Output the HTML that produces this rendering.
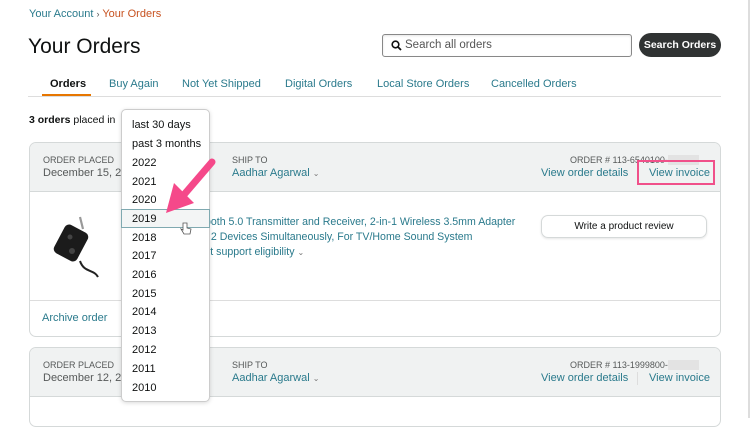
<!DOCTYPE html>
<html><head><meta charset="utf-8"><style>
*{margin:0;padding:0;box-sizing:border-box}
body{width:750px;height:418px;overflow:hidden;background:#fff;font-family:"Liberation Sans",sans-serif;color:#0f1111;position:relative;font-size:11px}
.a{position:absolute;white-space:nowrap}
.link{color:#2a7a8c}
.card{position:absolute;left:29px;width:692px;border:1px solid #d5d9d9;border-radius:7px;overflow:hidden}
.hd{background:#f0f2f2;border-bottom:1px solid #d5d9d9;height:49px;position:relative}
.lbl{font-size:9px;color:#565959}
.dd{position:absolute;left:121px;top:109px;width:89px;height:293px;background:#fff;border:1px solid #ccc;border-radius:5px;box-shadow:0 1px 4px rgba(0,0,0,.15)}
.dd div{position:absolute;left:10px;font-size:11px;color:#0f1111}
</style></head><body>
<div style="position:absolute;right:0;top:0;width:2px;height:418px;background:#ddd"></div>
<div class="a" style="left:29px;top:8px;font-size:11px"><span class="link">Your Account</span> <span style="color:#555;font-size:9px">›</span> <span style="color:#c7511f">Your Orders</span></div>
<div class="a" style="left:28px;top:35px;font-size:21px;color:#0f1111">Your Orders</div>
<div class="a" style="left:382px;top:34px;width:250px;height:23px;border:1px solid #888;border-radius:3px;box-shadow:inset 0 1px 2px rgba(0,0,0,.1)">
<svg class="a" style="left:8px;top:5px" width="11" height="11" viewBox="0 0 11 11"><circle cx="4.5" cy="4.5" r="3.3" fill="none" stroke="#111" stroke-width="1.6"/><path d="M7 7l3 3" stroke="#111" stroke-width="1.8"/></svg>
<span class="a" style="left:22px;top:4px;font-size:11.5px;color:#555">Search all orders</span></div>
<div class="a" style="left:639px;top:33px;width:82px;height:24px;background:#303333;border-radius:12px;color:#fff;font-size:10.5px;font-weight:bold;text-align:center;line-height:24px">Search Orders</div>
<div class="a" style="left:50px;top:78px;font-weight:bold;font-size:11px">Orders</div>
<div class="a" style="left:42px;top:94px;width:49px;height:2px;background:#e77600"></div>
<div class="a link" style="left:109px;top:78px">Buy Again</div>
<div class="a link" style="left:182px;top:78px">Not Yet Shipped</div>
<div class="a link" style="left:285px;top:78px">Digital Orders</div>
<div class="a link" style="left:377px;top:78px">Local Store Orders</div>
<div class="a link" style="left:491px;top:78px">Cancelled Orders</div>
<div class="a" style="left:28px;top:96px;width:693px;height:1px;background:#ddd"></div>
<div class="a" style="left:29px;top:114px;font-size:10.5px"><b>3 orders</b> placed in</div>

<div class="card" style="top:142px;height:195px">
<div class="hd">
<div class="a lbl" style="left:13px;top:12px">ORDER PLACED</div>
<div class="a" style="left:13px;top:24px;font-size:11px;color:#565959">December 15, 2021</div>
<div class="a lbl" style="left:202px;top:12px">SHIP TO</div>
<div class="a link" style="left:202px;top:24px;font-size:11px">Aadhar Agarwal <span style="color:#777;font-size:8px">⌄</span></div>
<div class="a lbl" style="left:540px;top:12px">ORDER # 113-6540100-<span style="background:#e3e3e3;color:#e3e3e3">xxxxxxx</span></div>
<div class="a link" style="left:511px;top:24px;font-size:11px">View order details</div>
<div class="a link" style="left:619px;top:24px;font-size:11px">View invoice</div>
</div>
<svg class="a" style="left:20px;top:70px" width="55" height="70" viewBox="0 0 55 70"><rect x="8" y="14" width="26" height="32" rx="5" fill="#1b1b1b" transform="rotate(28 21 30)"/><circle cx="22" cy="38" r="3" fill="#444"/><circle cx="20" cy="24" r="2.5" fill="#444"/><path d="M30 4 L33 16" stroke="#999" stroke-width="2.2"/><path d="M30 48 C34 60 44 56 48 64" stroke="#222" stroke-width="2" fill="none"/></svg>
<div class="a link" style="left:175px;top:73px;font-size:10.6px">ooth 5.0 Transmitter and Receiver, 2-in-1 Wireless 3.5mm Adapter</div>
<div class="a link" style="left:175px;top:88px;font-size:10.6px">, 2 Devices Simultaneously, For TV/Home Sound System</div>
<div class="a link" style="left:175px;top:103px;font-size:10.6px">ct support eligibility <span style="color:#777;font-size:8px">⌄</span></div>
<div class="a" style="left:511px;top:72px;width:166px;height:23px;border:1px solid #d5d9d9;border-radius:7px;box-shadow:0 1px 2px rgba(0,0,0,.1);text-align:center;line-height:21px;font-size:10px">Write a product review</div>
<div class="a" style="left:0;top:157px;width:692px;height:1px;background:#ddd"></div>
<div class="a link" style="left:12px;top:169px;font-size:11px">Archive order</div>
</div>
<div class="a" style="left:637px;top:160px;width:78px;height:25px;border:2px solid #f0508a"></div>

<div class="card" style="top:347px;height:80px">
<div class="hd">
<div class="a lbl" style="left:13px;top:12px">ORDER PLACED</div>
<div class="a" style="left:13px;top:24px;font-size:11px;color:#565959">December 12, 2021</div>
<div class="a lbl" style="left:202px;top:12px">SHIP TO</div>
<div class="a link" style="left:202px;top:24px;font-size:11px">Aadhar Agarwal <span style="color:#777;font-size:8px">⌄</span></div>
<div class="a lbl" style="left:540px;top:12px">ORDER # 113-1999800-<span style="background:#e3e3e3;color:#e3e3e3">xxxxxxx</span></div>
<div class="a link" style="left:511px;top:24px;font-size:11px">View order details</div>
<div class="a" style="left:607px;top:24px;width:1px;height:13px;background:#ddd"></div>
<div class="a link" style="left:619px;top:24px;font-size:11px">View invoice</div>
</div></div>

<div class="dd">
<div style="top:9px">last 30 days</div>
<div style="top:28px">past 3 months</div>
<div style="top:47px">2022</div>
<div style="top:66px">2021</div>
<div style="top:84px">2020</div>
<div style="top:99px;left:-1px;width:89px;height:19px;border:1px solid #7fa9b0;background:#f3f5f5"></div>
<div style="top:103px">2019</div>
<div style="top:122px">2018</div>
<div style="top:140px">2017</div>
<div style="top:159px">2016</div>
<div style="top:178px">2015</div>
<div style="top:196px">2014</div>
<div style="top:215px">2013</div>
<div style="top:234px">2012</div>
<div style="top:253px">2011</div>
<div style="top:272px">2010</div>
</div>
<svg class="a" style="left:160px;top:155px" width="60" height="65" viewBox="0 0 60 65"><path d="M52 7 L22 42" stroke="#f5498a" stroke-width="7" stroke-linecap="round"/><path d="M6 58 L14 28 L34 48 Z" fill="#f5498a"/></svg>
<svg class="a" style="left:180px;top:222px" width="12" height="14" viewBox="0 0 12 14"><path d="M3 1v7l-2-1 3 5h6l1-5-4-1V1z" fill="#fff" stroke="#555" stroke-width=".8"/></svg>
</body></html>
